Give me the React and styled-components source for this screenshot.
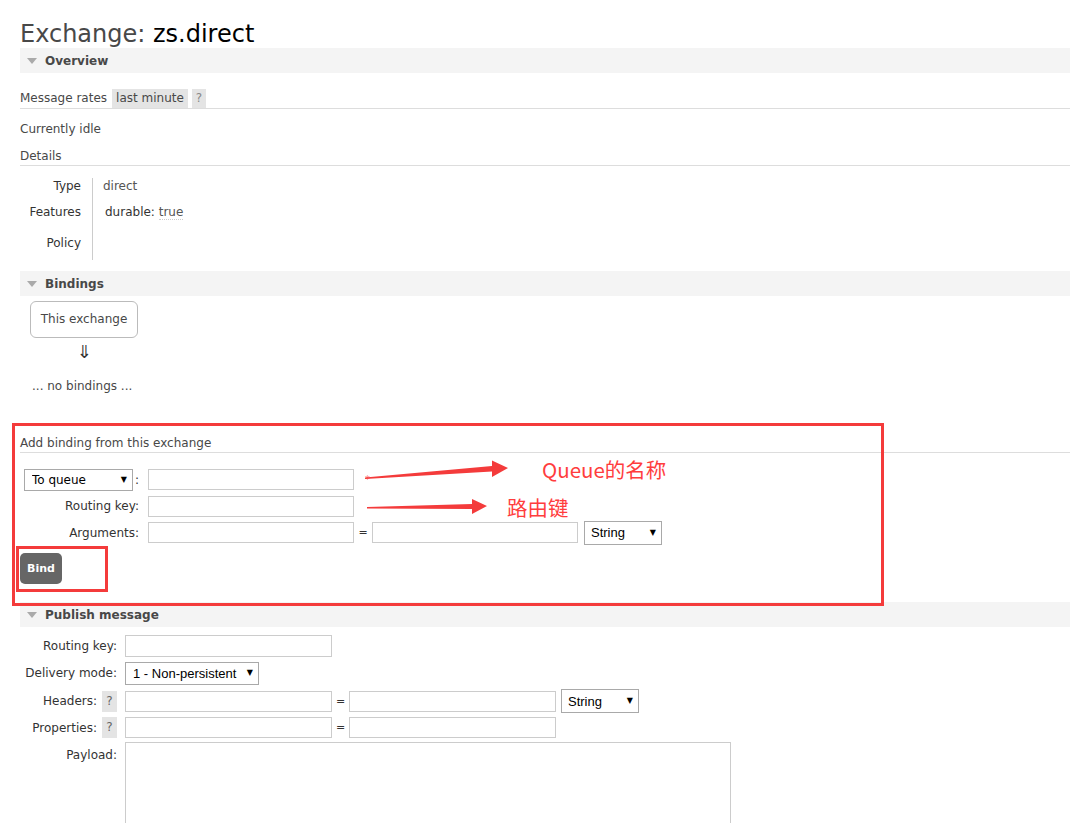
import React from 'react';
import styled, { createGlobalStyle } from 'styled-components';

const GlobalStyle = createGlobalStyle`
  body {
    margin: 0;
    background: #fff;
    font-family: "DejaVu Sans", Verdana, sans-serif;
    font-size: 12px;
    color: #484848;
  }
`;

const Page = styled.div`
  padding: 20px 0 40px 20px;
`;

const Title = styled.h1`
  margin: 0;
  font-size: 24px;
  line-height: 28px;
  font-weight: normal;
  color: #484848;

  b {
    font-weight: normal;
    color: #000;
  }
`;

const SectionBar = styled.div`
  display: flex;
  align-items: center;
  height: 25px;
  margin-top: ${p => p.$mt || 0}px;
  background: #f4f4f4;
  font-weight: bold;
  color: #484848;
`;

const Caret = styled.span`
  width: 0;
  height: 0;
  border-left: 5px solid transparent;
  border-right: 5px solid transparent;
  border-top: 6px solid #aaa;
  margin: 0 8px 0 7px;
`;

const RatesRow = styled.div`
  display: flex;
  margin-top: 16px;
  height: 19px;
  line-height: 19px;
  border-bottom: 1px solid #ddd;
`;

const Pill = styled.span`
  background: #e4e4e4;
  padding: 0 4px;
  margin-left: ${p => p.$ml}px;
  color: ${p => p.$muted ? '#888' : '#484848'};
`;

const PlainLine = styled.div`
  margin: ${p => p.$mt || 0}px 0 0 ${p => p.$ml || 0}px;
  line-height: 14px;
`;

const SubHeading = styled.div`
  margin-top: ${p => p.$mt || 0}px;
  line-height: 14px;
  padding-bottom: 2px;
  border-bottom: 1px solid #ddd;
`;

const DetailGrid = styled.div`
  display: grid;
  grid-template-columns: 73px auto;
  grid-template-rows: 26px 31px 25px;
  margin-top: 12px;
  line-height: 14px;
`;

const DetailLabel = styled.div`
  text-align: right;
  padding: 1px 11px 0 0;
  border-right: 1px solid #ccc;
  color: #333;
`;

const DetailValue = styled.div`
  padding: 1px 0 0 ${p => 10 + (p.$indent || 0)}px;
  color: #555;

  b {
    font-weight: normal;
    color: #333;
  }
`;

const Dotted = styled.span`
  border-bottom: 1px dotted #ccc;
`;

const ExchangeBox = styled.div`
  margin: 5px 0 0 10px;
  width: 106px;
  height: 35px;
  border: 1px solid #bbb;
  border-radius: 6px;
  line-height: 35px;
  text-align: center;
`;

const DownArrow = styled.div`
  margin: 4px 0 0 10px;
  width: 108px;
  text-align: center;
  font-size: 18px;
  line-height: 20px;
  color: #333;
`;

const BindingSection = styled.section`
  position: relative;
  margin-top: 43px;
`;

const Form = styled.div`
  display: flex;
  flex-direction: column;
  gap: ${p => p.$gap || 0}px;
  margin-top: ${p => p.$mt}px;
`;

const FormRow = styled.div`
  display: flex;
  align-items: ${p => p.$top ? 'flex-start' : 'center'};
  height: ${p => p.$h ? `${p.$h}px` : 'auto'};
`;

const FieldLabel = styled.label`
  flex-shrink: 0;
  width: ${p => p.$w}px;
  margin-right: ${p => p.$gap}px;
  padding-top: ${p => p.$pt || 0}px;
  display: flex;
  justify-content: flex-end;
  align-items: center;
  gap: ${p => p.$inner ?? 5}px;
  color: #333;
  line-height: 14px;
`;

const TextInput = styled.input`
  box-sizing: border-box;
  width: ${p => p.$w || 206}px;
  height: ${p => p.$h || 21}px;
  margin: 0;
  padding: 0 4px;
  border: 1px solid #ccc;
  border-radius: 0;
  font: inherit;
  outline: none;
`;

const Equals = styled.span`
  width: ${p => p.$w || 18}px;
  text-align: center;
  font-size: 11px;
  color: #333;
`;

const Star = styled.span`
  margin-left: 11px;
  color: #f77;
  font-size: 10px;
  line-height: 10px;
`;

const SelectWrap = styled.span`
  position: relative;
  display: inline-flex;
  margin-left: ${p => p.$ml || 0}px;
`;

const Select = styled.select`
  appearance: none;
  box-sizing: border-box;
  width: ${p => p.$w}px;
  height: ${p => p.$h}px;
  margin: 0;
  padding: 0 0 0 ${p => p.$pl}px;
  border: 1px solid #a9a9a9;
  border-radius: 0;
  background: #fff;
  color: #000;
  font-family: ${p => p.$arial ? '"Liberation Sans", Arial, sans-serif' : '"DejaVu Sans", Verdana, sans-serif'};
  font-size: ${p => p.$arial ? 13 : 12}px;
  outline: none;
`;

const SelectCaret = styled.span`
  position: absolute;
  right: 6px;
  top: 50%;
  transform: translateY(-50%);
  font-size: 8px;
  line-height: 8px;
  color: #000;
  pointer-events: none;
`;

const HelpTag = styled.span`
  width: 15px;
  height: 21px;
  line-height: 21px;
  text-align: center;
  background: #e4e4e4;
  color: #666;
`;

const BindButton = styled.button`
  display: block;
  margin-top: 7px;
  width: 42px;
  height: 31px;
  padding: 0;
  border: 0;
  border-radius: 5px;
  background: #666;
  color: #fff;
  font: bold 11px "DejaVu Sans", Verdana, sans-serif;
`;

const Payload = styled.textarea`
  box-sizing: border-box;
  width: 606px;
  height: 160px;
  margin: 0;
  border: 1px solid #ccc;
  resize: none;
  outline: none;
`;

/* annotation layer drawn over the binding form */
const RedFrame = styled.div`
  position: absolute;
  left: ${p => p.$x}px;
  top: ${p => p.$y}px;
  width: ${p => p.$w}px;
  height: ${p => p.$h}px;
  box-sizing: border-box;
  border: 3px solid #f43b3b;
  pointer-events: none;
`;

const Note = styled.span`
  position: absolute;
  left: ${p => p.$x}px;
  top: ${p => p.$y}px;
  font-family: "Noto Sans CJK SC", "Liberation Sans", sans-serif;
  font-size: 20.5px;
  line-height: 20px;
  color: #ff3d3d;
  white-space: nowrap;
`;

const ArrowLayer = styled.svg`
  position: absolute;
  left: 0;
  top: 0;
  overflow: visible;
  pointer-events: none;
`;

function Dropdown({ w, h, pl, arial, ml, value }) {
  return (
    <SelectWrap $ml={ml}>
      <Select $w={w} $h={h} $pl={pl} $arial={arial} defaultValue={value}>
        <option>{value}</option>
      </Select>
      <SelectCaret>▼</SelectCaret>
    </SelectWrap>
  );
}

function App() {
  return (
    <Page>
      <GlobalStyle />
      <Title>Exchange: <b>zs.direct</b></Title>

      <SectionBar><Caret />Overview</SectionBar>
      <RatesRow>
        <span>Message rates</span>
        <Pill $ml={5}>last minute</Pill>
        <Pill $ml={4} $muted>?</Pill>
      </RatesRow>
      <PlainLine $mt={13}>Currently idle</PlainLine>
      <SubHeading $mt={13}>Details</SubHeading>
      <DetailGrid>
        <DetailLabel>Type</DetailLabel>
        <DetailValue>direct</DetailValue>
        <DetailLabel>Features</DetailLabel>
        <DetailValue $indent={2}><b>durable:</b> <Dotted>true</Dotted></DetailValue>
        <DetailLabel>Policy</DetailLabel>
        <DetailValue />
      </DetailGrid>

      <SectionBar $mt={11}><Caret />Bindings</SectionBar>
      <ExchangeBox>This exchange</ExchangeBox>
      <DownArrow>⇓</DownArrow>
      <PlainLine $mt={17} $ml={12}>... no bindings ...</PlainLine>

      <BindingSection>
        <SubHeading>Add binding from this exchange</SubHeading>
        <Form $mt={13}>
          <FormRow $h={27}>
            <FieldLabel $w={119} $gap={9} $inner={2}>
              <Dropdown w={109} h={22} pl={7} value="To queue" />
              <span>:</span>
            </FieldLabel>
            <TextInput />
            <Star>*</Star>
          </FormRow>
          <FormRow $h={26}>
            <FieldLabel $w={119} $gap={9}>Routing key:</FieldLabel>
            <TextInput />
          </FormRow>
          <FormRow $h={27}>
            <FieldLabel $w={119} $gap={9}>Arguments:</FieldLabel>
            <TextInput />
            <Equals>=</Equals>
            <TextInput />
            <Dropdown ml={6} w={78} h={24} pl={6} arial value="String" />
          </FormRow>
        </Form>
        <BindButton>Bind</BindButton>

        <RedFrame $x={-8} $y={-13} $w={872} $h={183} />
        <RedFrame $x={-4} $y={110} $w={92} $h={46} />
        <ArrowLayer width="520" height="100">
          <polygon fill="#f43b3b" points="345,41.5 472,30 472,24.5 488,32 472,41 472,35.5 345,43" />
          <polygon fill="#f43b3b" points="347,71 452,68 452,63 467,70 452,78 452,73 347,72.5" />
        </ArrowLayer>
        <Note $x={522} $y={23}>Queue的名称</Note>
        <Note $x={487} $y={61}>路由键</Note>
      </BindingSection>

      <SectionBar $mt={18}><Caret />Publish message</SectionBar>
      <Form $mt={8} $gap={4}>
        <FormRow>
          <FieldLabel $w={97} $gap={8}>Routing key:</FieldLabel>
          <TextInput $h={22} $w={207} />
        </FormRow>
        <FormRow $h={24}>
          <FieldLabel $w={97} $gap={8}>Delivery mode:</FieldLabel>
          <Dropdown w={134} h={23} pl={7} arial value="1 - Non-persistent" />
        </FormRow>
        <FormRow $h={24}>
          <FieldLabel $w={97} $gap={8}>Headers: <HelpTag>?</HelpTag></FieldLabel>
          <TextInput $w={207} />
          <Equals $w={17}>=</Equals>
          <TextInput $w={207} />
          <Dropdown ml={5} w={78} h={24} pl={6} arial value="String" />
        </FormRow>
        <FormRow>
          <FieldLabel $w={97} $gap={8}>Properties: <HelpTag>?</HelpTag></FieldLabel>
          <TextInput $w={207} />
          <Equals $w={17}>=</Equals>
          <TextInput $w={207} />
        </FormRow>
        <FormRow $top>
          <FieldLabel $w={97} $gap={8} $pt={6}>Payload:</FieldLabel>
          <Payload />
        </FormRow>
      </Form>
    </Page>
  );
}

export default App;
